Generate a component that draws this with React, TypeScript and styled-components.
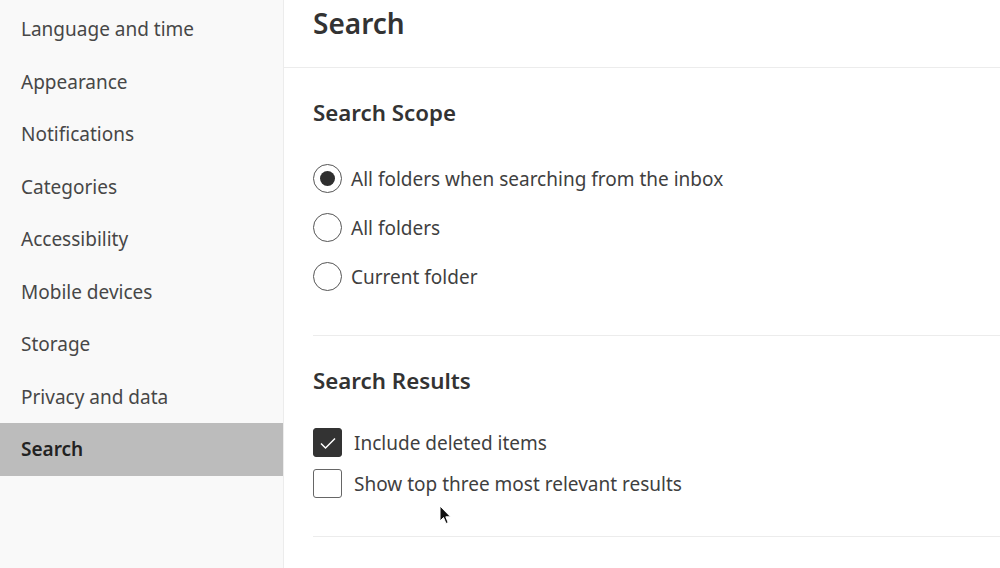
import { useState } from 'react';
import styled, { createGlobalStyle } from 'styled-components';

const GlobalStyle = createGlobalStyle`
  * {
    margin: 0;
    padding: 0;
    box-sizing: border-box;
  }

  html, body, #root {
    height: 100%;
  }

  body {
    background: #ffffff;
    font-family: 'Noto Sans', 'Open Sans', sans-serif;
    color: #333333;
    overflow: hidden;
  }
`;

const Page = styled.div`
  display: flex;
  height: 568px;
  width: 1000px;
`;

const Sidebar = styled.nav`
  width: 284px;
  flex-shrink: 0;
  background: #f9f9f9;
  border-right: 1px solid #ececec;
  padding-top: 3px;
  display: flex;
  flex-direction: column;
`;

const NavItem = styled.div<{ active?: boolean }>`
  height: 52.5px;
  display: flex;
  align-items: center;
  padding-left: 21px;
  font-size: 19px;
  color: ${p => (p.active ? '#222222' : '#474747')};
  background: ${p => (p.active ? '#bcbcbc' : 'transparent')};
  font-weight: ${p => (p.active ? 600 : 400)};
  cursor: pointer;
`;

const Main = styled.main`
  flex: 1;
  display: flex;
  flex-direction: column;
`;

const Header = styled.header`
  height: 68px;
  padding: 0 0 0 29px;
  border-bottom: 1px solid #ececec;
  display: flex;
  align-items: flex-start;
`;

const Title = styled.h1`
  font-size: 28px;
  font-weight: 600;
  color: #333333;
  line-height: 1;
  margin-top: 9px;
`;

const Section = styled.section`
  margin-left: 29px;
  border-bottom: 1px solid #ececec;
  display: flex;
  flex-direction: column;
`;

const SectionTitle = styled.h2`
  font-size: 22.3px;
  font-weight: 600;
  color: #333333;
  line-height: 30px;
`;

const Options = styled.div<{ gap: number }>`
  display: flex;
  flex-direction: column;
  gap: ${p => p.gap}px;
`;

const Option = styled.label<{ textGap: number }>`
  display: flex;
  align-items: center;
  gap: ${p => p.textGap}px;
  height: 29px;
  font-size: 19px;
  color: #3f3f3f;
  cursor: pointer;
`;

const Radio = styled.span<{ checked: boolean }>`
  width: 29px;
  height: 29px;
  border-radius: 50%;
  border: 1.5px solid #555555;
  display: flex;
  align-items: center;
  justify-content: center;
  flex-shrink: 0;

  &::after {
    content: '';
    width: 15px;
    height: 15px;
    border-radius: 50%;
    background: #2f2f2f;
    display: ${p => (p.checked ? 'block' : 'none')};
  }
`;

const Box = styled.span<{ checked: boolean }>`
  width: 29px;
  height: 29px;
  border-radius: 3px;
  border: 1.5px solid ${p => (p.checked ? '#333333' : '#666666')};
  background: ${p => (p.checked ? '#333333' : '#ffffff')};
  display: flex;
  align-items: center;
  justify-content: center;
  flex-shrink: 0;
`;

const Cursor = styled.svg`
  position: absolute;
  left: 439px;
  top: 505px;
  pointer-events: none;
`;

const navItems = [
  'Language and time',
  'Appearance',
  'Notifications',
  'Categories',
  'Accessibility',
  'Mobile devices',
  'Storage',
  'Privacy and data',
  'Search',
];

const scopes = [
  'All folders when searching from the inbox',
  'All folders',
  'Current folder',
];

const Check = () => (
  <svg width="20" height="20" viewBox="0 0 20 20">
    <path d="M3 10.5 L7.5 15 L17 5.5" fill="none" stroke="#fff" strokeWidth="1.5" />
  </svg>
);

function App() {
  const [scope, setScope] = useState(0);
  const [deleted, setDeleted] = useState(true);
  const [topThree, setTopThree] = useState(false);

  return (
    <>
      <GlobalStyle />
      <Page>
        <Sidebar>
          {navItems.map(item => (
            <NavItem key={item} active={item === 'Search'}>
              {item}
            </NavItem>
          ))}
        </Sidebar>

        <Main>
          <Header>
            <Title>Search</Title>
          </Header>

          <Section style={{ paddingTop: 30, paddingBottom: 44 }}>
            <SectionTitle>Search Scope</SectionTitle>
            <Options gap={20} style={{ marginTop: 36 }}>
              {scopes.map((s, i) => (
                <Option key={s} textGap={9} onClick={() => setScope(i)}>
                  <Radio checked={scope === i} />
                  {s}
                </Option>
              ))}
            </Options>
          </Section>

          <Section style={{ paddingTop: 30, paddingBottom: 38 }}>
            <SectionTitle>Search Results</SectionTitle>
            <Options gap={12} style={{ marginTop: 32 }}>
              <Option textGap={12} onClick={() => setDeleted(!deleted)}>
                <Box checked={deleted}>{deleted && <Check />}</Box>
                Include deleted items
              </Option>
              <Option textGap={12} onClick={() => setTopThree(!topThree)}>
                <Box checked={topThree}>{topThree && <Check />}</Box>
                Show top three most relevant results
              </Option>
            </Options>
          </Section>
        </Main>
      </Page>

      <Cursor width="14" height="22" viewBox="0 0 14 22">
        <path d="M1 1 L1 16 L4.5 12.5 L7 18.5 L9.2 17.6 L6.8 11.8 L11.5 11.8 Z" fill="#111" stroke="#fff" strokeWidth="1" />
      </Cursor>
    </>
  );
}

export default App;
